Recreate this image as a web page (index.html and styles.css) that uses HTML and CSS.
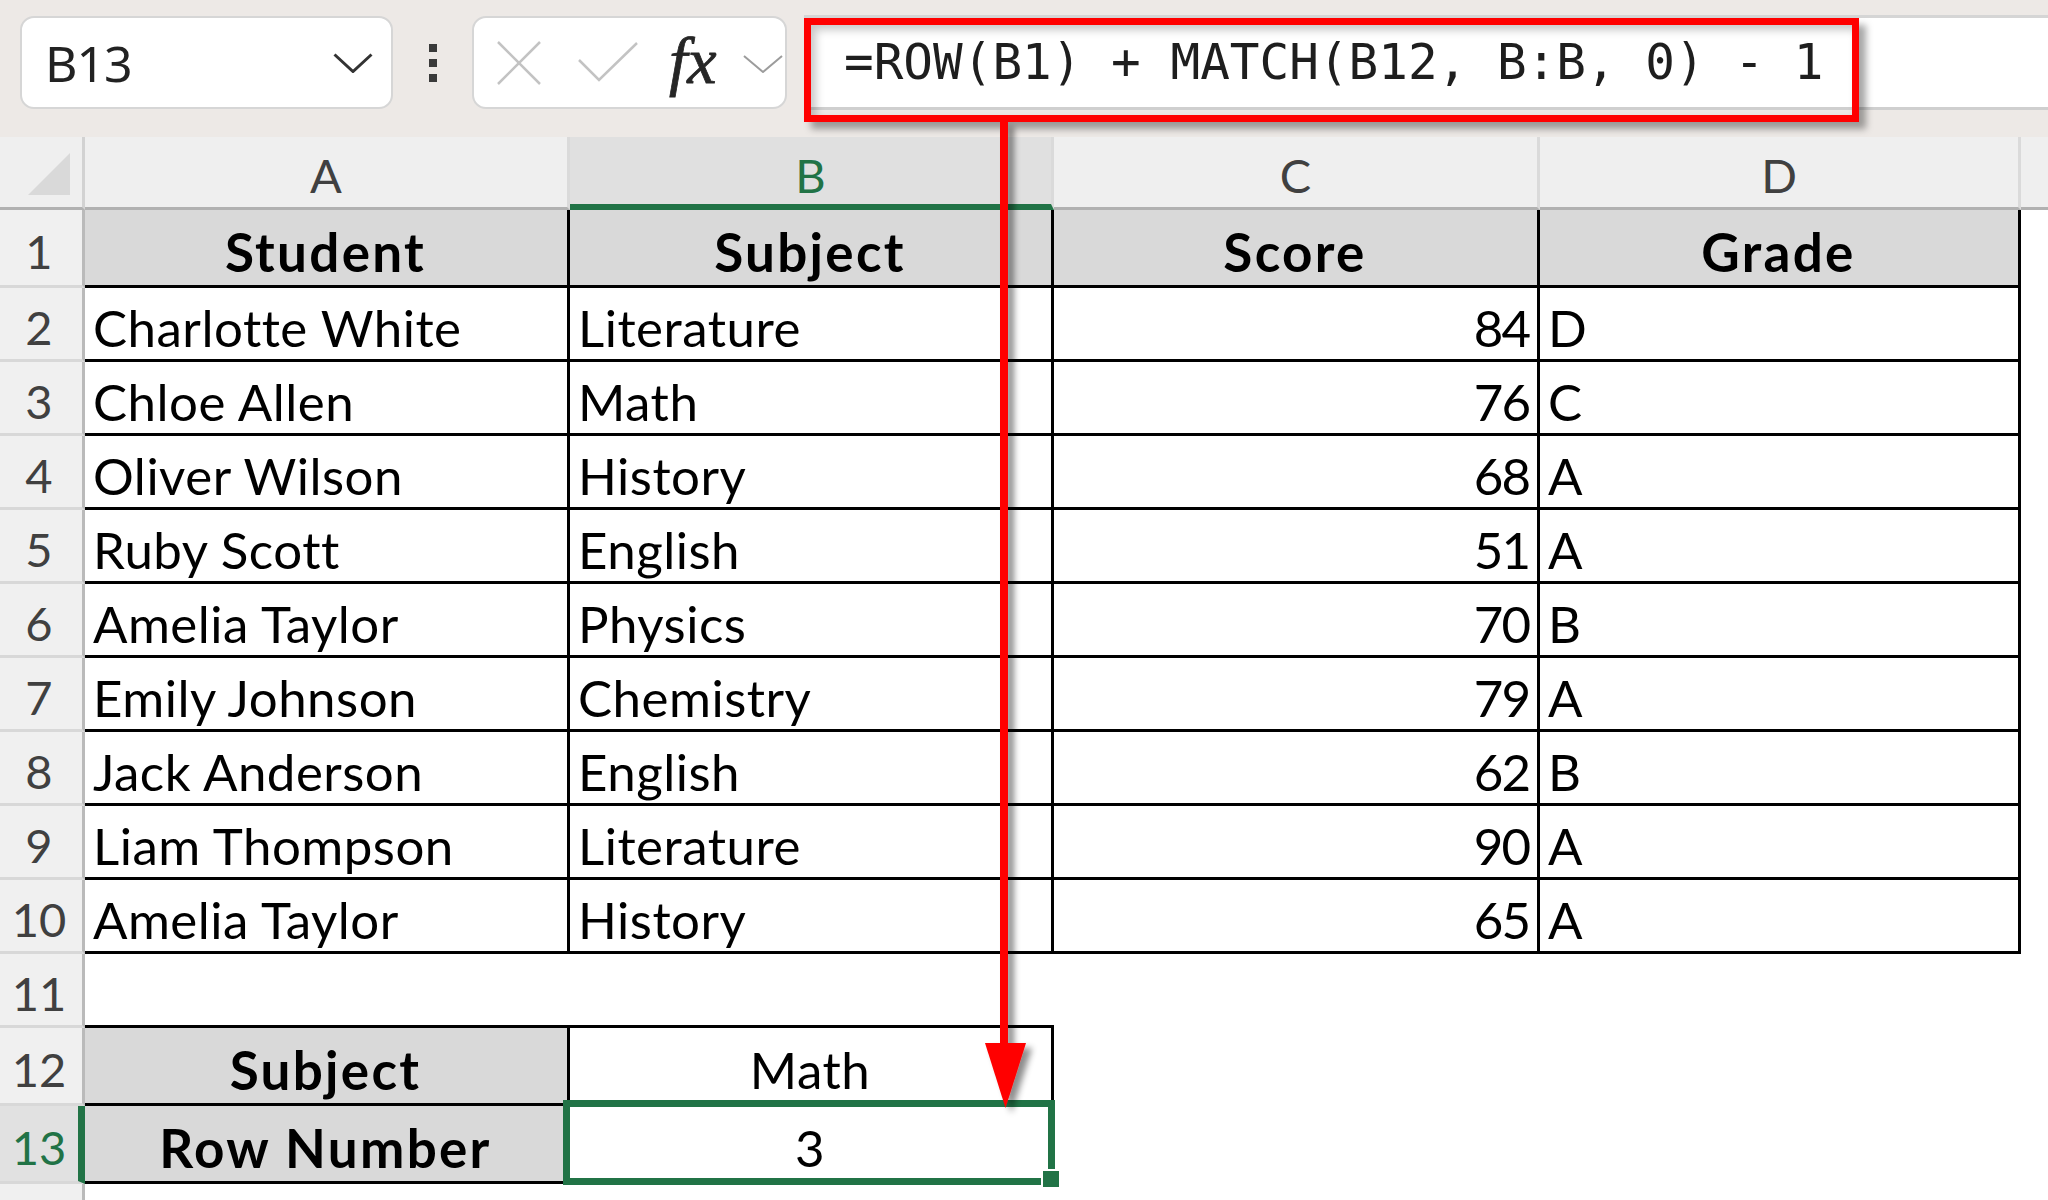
FILE: index.html
```html
<!DOCTYPE html>
<html>
<head>
<meta charset="utf-8">
<title>Sheet</title>
<link rel="stylesheet" href="styles.css">
</head>
<body>
<div class="toolbar">
  <div class="namebox">
    <span class="ref">B13</span>
    <svg class="chev" width="40" height="20" viewBox="0 0 40 20"><polyline points="1.5,1.5 20,18.5 38.5,1.5"/></svg>
  </div>
  <div class="dots"><i></i><i></i><i></i></div>
  <div class="fxbox">
    <svg class="ico-x" width="44" height="44" viewBox="0 0 44 44"><path d="M1 1 L43 43 M43 1 L1 43"/></svg>
    <svg class="ico-check" width="60" height="40" viewBox="0 0 60 40"><polyline points="1,18 21,38 59,1"/></svg>
    <span class="fx">fx</span>
    <svg class="ico-chev" width="40" height="18" viewBox="0 0 40 18"><polyline points="1,1 20,17 39,1"/></svg>
  </div>
  <div class="formula"><span class="ftext">=ROW(B1) + MATCH(B12, B:B, 0) - 1</span></div>
</div>

<div class="sheet">
  <div class="corner"><svg width="42" height="42" viewBox="0 0 42 42"><polygon points="42,0 42,42 0,42"/></svg></div>
  <div class="ch">A</div>
  <div class="ch sel">B</div>
  <div class="ch">C</div>
  <div class="ch">D</div>
  <div class="ch last"></div>

  <div class="rh">1</div>
  <div class="c b hd">Student</div>
  <div class="c b hd">Subject</div>
  <div class="c b hd">Score</div>
  <div class="c b hd">Grade</div>
  <div class="c"></div>

  <div class="rh">2</div>
  <div class="c b">Charlotte White</div>
  <div class="c b">Literature</div>
  <div class="c b r">84</div>
  <div class="c b">D</div>
  <div class="c"></div>

  <div class="rh">3</div>
  <div class="c b">Chloe Allen</div>
  <div class="c b">Math</div>
  <div class="c b r">76</div>
  <div class="c b">C</div>
  <div class="c"></div>

  <div class="rh">4</div>
  <div class="c b">Oliver Wilson</div>
  <div class="c b">History</div>
  <div class="c b r">68</div>
  <div class="c b">A</div>
  <div class="c"></div>

  <div class="rh">5</div>
  <div class="c b">Ruby Scott</div>
  <div class="c b">English</div>
  <div class="c b r">51</div>
  <div class="c b">A</div>
  <div class="c"></div>

  <div class="rh">6</div>
  <div class="c b">Amelia Taylor</div>
  <div class="c b">Physics</div>
  <div class="c b r">70</div>
  <div class="c b">B</div>
  <div class="c"></div>

  <div class="rh">7</div>
  <div class="c b">Emily Johnson</div>
  <div class="c b">Chemistry</div>
  <div class="c b r">79</div>
  <div class="c b">A</div>
  <div class="c"></div>

  <div class="rh">8</div>
  <div class="c b">Jack Anderson</div>
  <div class="c b">English</div>
  <div class="c b r">62</div>
  <div class="c b">B</div>
  <div class="c"></div>

  <div class="rh">9</div>
  <div class="c b">Liam Thompson</div>
  <div class="c b">Literature</div>
  <div class="c b r">90</div>
  <div class="c b">A</div>
  <div class="c"></div>

  <div class="rh">10</div>
  <div class="c b">Amelia Taylor</div>
  <div class="c b">History</div>
  <div class="c b r">65</div>
  <div class="c b">A</div>
  <div class="c"></div>

  <div class="rh">11</div>
  <div class="c bb"></div>
  <div class="c bb"></div>
  <div class="c"></div>
  <div class="c"></div>
  <div class="c"></div>

  <div class="rh">12</div>
  <div class="c b hd">Subject</div>
  <div class="c b m">Math</div>
  <div class="c"></div>
  <div class="c"></div>
  <div class="c"></div>

  <div class="rh sel">13</div>
  <div class="c b hd">Row Number</div>
  <div class="c b m">3<div class="selbox"></div><div class="handle"></div></div>
  <div class="c"></div>
  <div class="c"></div>
  <div class="c"></div>

  <div class="rh"></div>
  <div class="c"></div>
  <div class="c"></div>
  <div class="c"></div>
  <div class="c"></div>
  <div class="c"></div>
</div>

<div class="highlight"></div>

<svg class="arrow" width="2048" height="1200" viewBox="0 0 2048 1200">
  <defs>
    <filter id="sh" filterUnits="userSpaceOnUse" x="940" y="100" width="140" height="1060">
      <feDropShadow dx="6" dy="5" stdDeviation="3" flood-color="#000" flood-opacity="0.45"/>
    </filter>
  </defs>
  <g filter="url(#sh)" fill="#ff0000">
    <rect x="1000" y="122" width="8" height="925"/>
    <polygon points="985,1043 1026,1043 1005.5,1108"/>
  </g>
</svg>
</body>
</html>
```

FILE: styles.css
```css
* { box-sizing: border-box; margin: 0; padding: 0; }

html, body {
  width: 2048px;
  height: 1200px;
  overflow: hidden;
  background: #ffffff;
}

body {
  position: relative;
  font-family: Lato, "Liberation Sans", sans-serif;
  color: #000;
}

/* ---------- toolbar ---------- */
.toolbar {
  height: 137px;
  background: #ede9e6;
  display: flex;
  align-items: flex-start;
  padding: 16px 0 0 20px;
}

.namebox {
  width: 373px;
  height: 93px;
  background: #fff;
  border: 2px solid #d6d6d6;
  border-radius: 14px;
  display: flex;
  align-items: center;
  padding: 0 18px 0 23px;
}

.ref {
  flex: 1;
  font-family: "Noto Sans", sans-serif;
  font-size: 50px;
  color: #222;
  line-height: 1;
  letter-spacing: -1px;
}

.chev { fill: none; stroke: #333; stroke-width: 3; }

.dots {
  width: 79px;
  display: flex;
  flex-direction: column;
  align-items: center;
  gap: 7px;
  padding-top: 28px;
}
.dots i { display: block; width: 8px; height: 8px; background: #3a3a3a; }

.fxbox {
  width: 315px;
  height: 93px;
  background: #fff;
  border: 2px solid #d6d6d6;
  border-radius: 14px;
  display: flex;
  align-items: center;
  padding-left: 23px;
}
.ico-x { fill: none; stroke: #c3c3c3; stroke-width: 2.5; }
.ico-check { margin-left: 37px; fill: none; stroke: #c3c3c3; stroke-width: 2.5; margin-top: -2px; }
.fx {
  display: inline-block;
  width: 53px;
  margin-left: 31px;
  font-family: "Liberation Serif", serif;
  font-style: italic;
  font-size: 66px;
  line-height: 1;
  color: #262626;
  -webkit-text-stroke: 0.8px #262626;
  margin-top: -4px;
}
.ico-chev { margin-left: 21px; fill: none; stroke: #9c9c9c; stroke-width: 2; margin-top: 2px; }

.formula {
  flex: 1;
  margin-left: 17px;
  margin-top: -1px;
  height: 95px;
  background: #fff;
  border-top: 3px solid #d5d5d5;
  border-bottom: 3px solid #cfcfcf;
  padding-left: 40px;
  display: flex;
  align-items: center;
}
.ftext {
  font-family: "DejaVu Sans Mono", "Liberation Mono", monospace;
  font-size: 49.3px;
  color: #1e1e1e;
  white-space: pre;
  line-height: 1;
}

.highlight {
  position: absolute;
  left: 804px;
  top: 18px;
  width: 1055px;
  height: 104px;
  border: 7px solid #ff0000;
  box-shadow: 7px 7px 7px rgba(0, 0, 0, 0.35), inset 5px 5px 8px rgba(0, 0, 0, 0.22);
}

/* ---------- sheet ---------- */
.sheet {
  display: grid;
  grid-template-columns: 85px 485px 484px 486px 481px 27px;
  grid-template-rows: 73px 78px repeat(10, 74px) 78px 78px 40px;
}

.corner {
  background: #efefef;
  border-right: 3px solid #d2d2d2;
  border-bottom: 3px solid #b1b1b1;
  padding: 16px 0 0 28px;
}
.corner svg { display: block; fill: #d9d9d9; }

.ch {
  background: #efefef;
  border-right: 3px solid #dadada;
  border-bottom: 3px solid #b1b1b1;
  display: flex;
  align-items: center;
  justify-content: center;
  font-size: 47px;
  color: #404040;
  padding-top: 6px;
}
.ch.sel {
  background: #e0e0e0;
  color: #217346;
  border-bottom: 6px solid #217346;
  padding-top: 9px;
}
.ch.last { border-right: none; }

.rh {
  background: #f0f0f0;
  border-right: 3px solid #bababa;
  border-bottom: 3px solid #d8d8d8;
  display: flex;
  align-items: center;
  justify-content: center;
  font-size: 47px;
  color: #404040;
  padding: 7px 4px 0 0;
}
.rh.sel {
  background: #e1e1e1;
  color: #217346;
  border-right: 7px solid #217346;
  padding-right: 0;
}

.c {
  position: relative;
  display: flex;
  align-items: center;
  padding: 7px 9px 0 8px;
  font-size: 51px;
  letter-spacing: 0.5px;
  white-space: nowrap;
}
.b { border-right: 3px solid #000; border-bottom: 3px solid #000; }
.bb { border-bottom: 3px solid #000; }
.hd {
  background: #d9d9d9;
  font-weight: 700;
  font-size: 53px;
  letter-spacing: 2.3px;
  justify-content: center;
}
.r { justify-content: flex-end; letter-spacing: -2px; padding-right: 8px; }
.m { justify-content: center; }

.selbox {
  position: absolute;
  left: -7px;
  top: -6px;
  right: -4px;
  bottom: -4px;
  border: 7px solid #217346;
}
.handle {
  position: absolute;
  right: -8px;
  bottom: -6px;
  width: 16px;
  height: 16px;
  background: #217346;
  box-shadow: 0 0 0 2px #ffffff;
}

.arrow {
  position: absolute;
  left: 0;
  top: 0;
  pointer-events: none;
}
```
